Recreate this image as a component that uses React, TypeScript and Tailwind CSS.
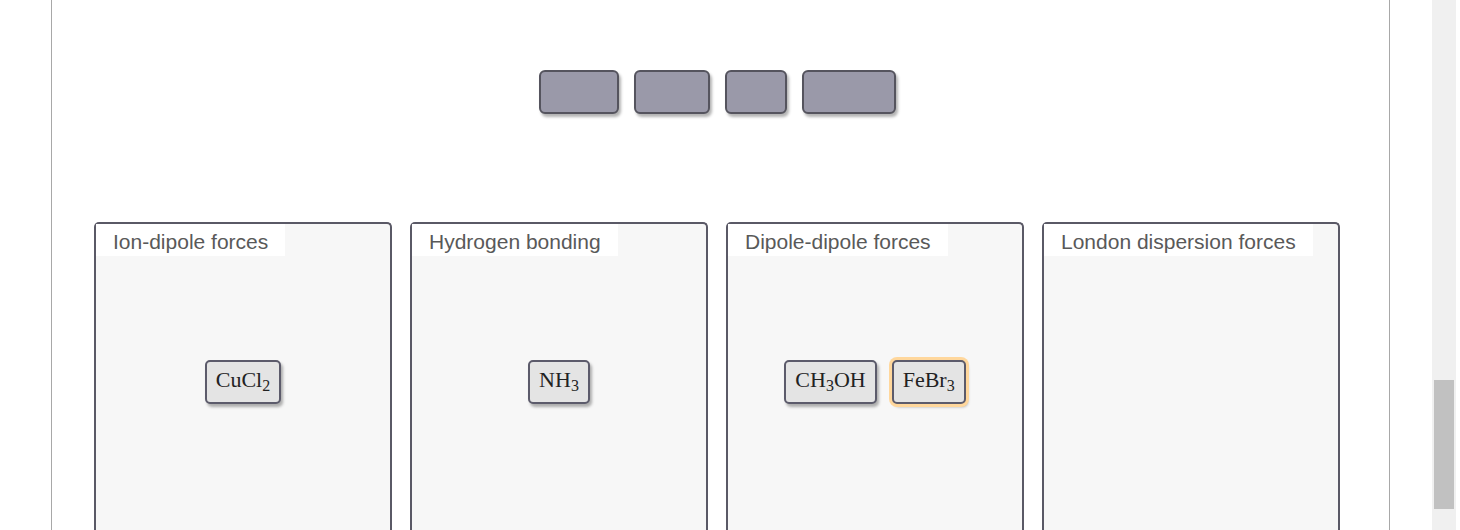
import React from 'react';

const blanks = [80, 76, 62, 94];

type Chip = { id: string; base: React.ReactNode; active?: boolean };

const Sub: React.FC<{ children: React.ReactNode }> = ({ children }) => (
  <span className="text-[16px] relative top-[4px] leading-none">{children}</span>
);

const columns: { title: string; chips: Chip[] }[] = [
  { title: 'Ion-dipole forces', chips: [{ id: 'cucl2', base: <>CuCl<Sub>2</Sub></> }] },
  { title: 'Hydrogen bonding', chips: [{ id: 'nh3', base: <>NH<Sub>3</Sub></> }] },
  {
    title: 'Dipole-dipole forces',
    chips: [
      { id: 'ch3oh', base: <>CH<Sub>3</Sub>OH</> },
      { id: 'febr3', base: <>FeBr<Sub>3</Sub></>, active: true },
    ],
  },
  { title: 'London dispersion forces', chips: [] },
];

export default function App() {
  return (
    <div className="flex h-[530px] w-[1460px] overflow-hidden bg-white" style={{ fontFamily: 'Arial, "Liberation Sans", sans-serif' }}>
      <div className="w-[51px] shrink-0" />
      <div className="w-[1339px] shrink-0 border-x border-[#a8a8a8] h-full">
        {/* answer blanks */}
        <div className="flex gap-[15px] pl-[487px] pt-[70px]">
          {blanks.map((w, i) => (
            <div
              key={i}
              style={{ width: w }}
              className="h-[44px] rounded-[6px] border-2 border-[#55545e] bg-[#9a99a9] shadow-[2px_3px_3px_rgba(0,0,0,0.3)]"
            />
          ))}
        </div>

        {/* category bins */}
        <div className="flex gap-[18px] pl-[42px] pt-[108px]">
          {columns.map((col) => (
            <div
              key={col.title}
              className="w-[298px] h-[320px] shrink-0 rounded-t-[5px] border-2 border-b-0 border-[#5a5966] bg-[#f7f7f7]"
            >
              <div className="inline-block bg-white px-[17px] h-[32px] leading-[36px] text-[21px] text-[#595959]">
                {col.title}
              </div>
              <div className="flex justify-center gap-[15px] pt-[104px]">
                {col.chips.map((c) => (
                  <div
                    key={c.id}
                    className={
                      'h-[44px] px-[9px] flex items-center rounded-[5px] border-2 border-[#5c5b6b] bg-[#e4e4e4] text-[22px] text-[#222] leading-none shadow-[2px_3px_3px_rgba(0,0,0,0.3)] ' +
                      (c.active ? 'ring-[3px] ring-[#ffd79c]' : '')
                    }
                    style={{ fontFamily: '"Liberation Serif", "DejaVu Serif", serif' }}
                  >
                    <span className="relative -top-[2px]">{c.base}</span>
                  </div>
                ))}
              </div>
            </div>
          ))}
        </div>
      </div>
      <div className="w-[42px] shrink-0" />
      <div className="w-[24px] shrink-0 h-full bg-[#f0f0f0] px-[2px] pt-[380px]">
        <div className="h-[129px] bg-[#c1c1c1]" />
      </div>
    </div>
  );
}
